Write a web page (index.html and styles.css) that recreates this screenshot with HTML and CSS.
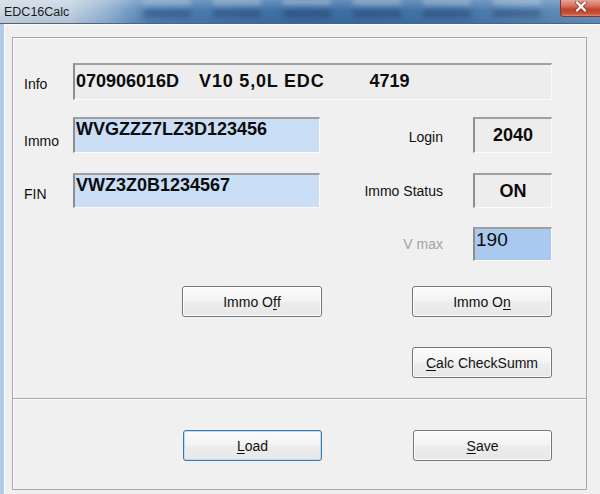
FILE: index.html
```html
<!DOCTYPE html>
<html>
<head>
<meta charset="utf-8">
<title>EDC16Calc</title>
<link rel="stylesheet" href="styles.css">
</head>
<body>
<div class="titlebar">
  <span class="title">EDC16Calc</span>
  <div class="blobs">
    <span class="blob"></span><span class="blob"></span><span class="blob"></span>
    <span class="blob"></span><span class="blob"></span><span class="blob"></span>
  </div>
  <div class="close">
    <svg width="14" height="11" viewBox="0 0 14 11">
      <path d="M3 1.5 L11 9.5 M11 1.5 L3 9.5" stroke="#6a2418" stroke-opacity="0.55" stroke-width="4.2" stroke-linecap="round"/>
      <path d="M3 1.5 L11 9.5 M11 1.5 L3 9.5" stroke="#ffffff" stroke-width="2.4" stroke-linecap="round"/>
    </svg>
  </div>
</div>
<div class="client">
  <div class="group main">
    <div class="row r-info">
      <span class="lbl lbl-info">Info</span>
      <div class="field info">070906016D    <span class="wide">V10 5,0L EDC</span>         4719</div>
    </div>
    <div class="row r-immo">
      <span class="lbl lbl-immo">Immo</span>
      <div class="field blue">WVGZZZ7LZ3D123456</div>
      <span class="rlbl rlbl-login">Login</span>
      <div class="val">2040</div>
    </div>
    <div class="row r-fin">
      <span class="lbl lbl-fin">FIN</span>
      <div class="field blue">VWZ3Z0B1234567</div>
      <span class="rlbl">Immo Status</span>
      <div class="val">ON</div>
    </div>
    <div class="row r-vmax">
      <span class="spacer"></span>
      <span class="rlbl disabled">V max</span>
      <div class="val vmax">190</div>
    </div>
    <div class="brow">
      <button class="btn">Immo O<u>f</u>f</button>
      <button class="btn">Immo O<u>n</u></button>
    </div>
    <div class="brow brow2">
      <button class="btn"><u>C</u>alc CheckSumm</button>
    </div>
  </div>
  <div class="group foot">
    <button class="btn btn-s default"><u>L</u>oad</button>
    <button class="btn btn-s"><u>S</u>ave</button>
  </div>
</div>
</body>
</html>
```
FILE: styles.css
```css
* { box-sizing: border-box; }

body {
  margin: 0;
  width: 600px;
  height: 494px;
  overflow: hidden;
  background: #f0f0f0;
  font-family: "Liberation Sans", Arial, sans-serif;
  color: #111;
}

.titlebar {
  height: 24px;
  border-bottom: 1px solid #4a6686;
  display: flex;
  align-items: flex-start;
  overflow: hidden;
  background:
    linear-gradient(to bottom, rgba(255,255,255,0.22), rgba(255,255,255,0) 45%, rgba(10,30,60,0.10)),
    linear-gradient(to right, #cfdae4 0, #c3d3e2 70px, #93b2d1 110px, #5382b5 150px, #3d6ea5 300px, #4475aa 450px, #5b88b8 540px, #6a93bf 600px);
}

.title {
  flex: none;
  width: 143px;
  padding: 5px 0 0 4px;
  font-size: 12.5px;
  line-height: 14px;
  color: #1b1b1b;
}

.blobs {
  display: flex;
  gap: 22px;
  flex: none;
}

.blob {
  width: 48px;
  height: 23px;
  filter: blur(2.4px);
  background: linear-gradient(to bottom,
    rgba(255,255,255,0.55) 0, rgba(255,255,255,0.15) 4px, rgba(255,255,255,0) 7px,
    rgba(15,35,65,0) 9px, rgba(15,35,65,0.30) 11px, rgba(15,35,65,0.30) 16px, rgba(15,35,65,0) 18px);
}

.close {
  margin-left: auto;
  flex: none;
  width: 40px;
  height: 17px;
  border-left: 1px solid #7a3a2e;
  border-bottom: 1px solid #7a3a2e;
  border-bottom-left-radius: 4px;
  background: linear-gradient(to bottom, #e6a597 0, #d7735f 35%, #c1432a 60%, #c9503a 85%, #dc8a74 100%);
  display: flex;
  justify-content: center;
  padding-top: 1px;
}

.client {
  height: 470px;
  border-left: 4px solid #b0cce8;
  padding: 13px 0 0 8px;
  box-shadow: inset 1px 1px 0 #fbfbfb;
}

.group {
  width: 575px;
  border: 1px solid #a9a9a9;
  box-shadow: inset 1px 1px 0 #fdfdfd;
}

.group.main {
  height: 362px;
  padding: 25px 0 0 11px;
}

.group.foot {
  height: 91px;
  border-top: 0;
  padding: 31px 0 0 170px;
  display: flex;
  align-items: flex-start;
  gap: 91px;
}

.row {
  display: flex;
  align-items: center;
}

.r-info { height: 37px; }
.r-immo { height: 36px; margin-top: 17px; }
.r-fin  { height: 35px; margin-top: 20px; }
.r-vmax { height: 34px; margin-top: 19px; }

.lbl {
  flex: none;
  width: 49px;
  font-size: 14px;
}
.lbl-info { margin-top: 4px; }
.lbl-immo { margin-top: 11px; }
.lbl-fin  { margin-top: 6px; }

.field {
  flex: none;
  height: 100%;
  border-top: 2px solid #a0a0a0;
  border-left: 2px solid #8e8e8e;
  border-right: 1px solid #fbfbfb;
  border-bottom: 1px solid #fbfbfb;
  font-weight: bold;
  font-size: 18px;
  line-height: 21px;
  color: #0c0c0c;
}

.field.info {
  width: 479px;
  background: #ededed;
  padding: 6px 0 0 1px;
  white-space: pre;
}

.wide { letter-spacing: 0.8px; }

.field.blue {
  width: 247px;
  background: #cadff6;
  padding: 0 0 0 1px;
}

.spacer {
  flex: none;
  width: 296px;
}

.rlbl {
  flex: none;
  width: 153px;
  text-align: right;
  padding-right: 30px;
  font-size: 14px;
}
.rlbl-login { margin-top: 4px; }
.rlbl.disabled { color: #a3a3a3; }

.val {
  flex: none;
  width: 79px;
  height: 100%;
  border-top: 2px solid #a0a0a0;
  border-left: 2px solid #8e8e8e;
  border-right: 1px solid #fbfbfb;
  border-bottom: 1px solid #fbfbfb;
  background: #ededed;
  display: flex;
  align-items: center;
  justify-content: center;
  font-weight: bold;
  font-size: 18px;
  color: #0c0c0c;
}

.val.vmax {
  background: #a9c9ef;
  justify-content: flex-start;
  align-items: flex-start;
  font-weight: normal;
  font-size: 19px;
  line-height: 22px;
  padding: 0 0 0 1px;
}

.brow {
  display: flex;
  gap: 90px;
  margin-top: 25px;
  padding-left: 158px;
}

.brow2 {
  margin-top: 30px;
  padding-left: 388px;
}

.btn {
  flex: none;
  width: 140px;
  height: 31px;
  padding: 0;
  margin: 0;
  border: 1px solid #6f7782;
  border-radius: 3px;
  background: linear-gradient(to bottom, #fbfbfb 0, #f4f4f4 45%, #ececec 55%, #e8e8e8 100%);
  box-shadow: inset 0 0 0 1px rgba(255,255,255,0.85);
  font-family: "Liberation Sans", Arial, sans-serif;
  font-size: 14px;
  color: #111;
  display: flex;
  align-items: center;
  justify-content: center;
}

.btn-s { width: 139px; }

.btn.default {
  border-color: #3b76ad;
  box-shadow: inset 0 0 0 1px #bddcf3;
}

u { text-underline-offset: 2px; }
```
